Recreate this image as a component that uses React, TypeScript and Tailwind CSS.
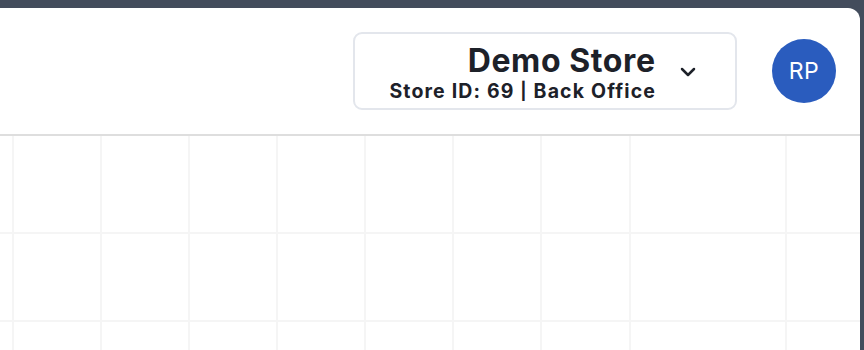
import React from "react";

const vLines = [13, 101, 189, 277, 365, 453, 541, 630, 786];
const hLines = [97, 185];

function Chevron() {
  return (
    <svg width="24" height="24" viewBox="0 0 24 24" fill="none" stroke="#1d2129" strokeWidth="2.5" strokeLinecap="round" strokeLinejoin="round">
      <path d="m6 9 6 6 6-6" />
    </svg>
  );
}

export default function App() {
  return (
    <div className="w-[864px] h-[350px] bg-[#434c5c] pt-[8px] pr-[4px] overflow-hidden" style={{ fontFamily: "Inter, 'Noto Sans', sans-serif" }}>
      <div className="w-[860px] h-[342px] bg-white rounded-tr-[12px] flex flex-col overflow-hidden">
        <header className="h-[128px] shrink-0 flex items-center justify-end pr-[24px] border-b-2 border-[#dedede]">
          <button className="w-[384px] h-[78px] rounded-[9px] border-2 border-[#e3e6ec] bg-white flex items-center justify-end pr-[35px]">
            <div className="flex flex-col items-end text-[#1d2129] font-bold mt-[3px]">
              <span className="text-[32px] leading-[36px] tracking-[0.6px] mr-[-0.6px]">Demo Store</span>
              <span className="text-[19.5px] leading-[22px] tracking-[1.15px] mr-[-1.15px] mt-[1px]">
                Store ID: 69 <span className="text-[17px] align-[1px]">|</span> Back Office
              </span>
            </div>
            <span className="ml-[21px] mt-[2px] flex"><Chevron /></span>
          </button>
          <div className="ml-[35px] w-[64px] h-[64px] rounded-full bg-[#2a5cbe] flex items-center justify-center text-white text-[23px] tracking-[0.5px]">
            RP
          </div>
        </header>
        <div className="relative flex-1">
          {vLines.map((x) => (
            <div key={"v" + x} className="absolute top-0 bottom-0 w-[2px] bg-[#f5f5f5]" style={{ left: x - 1 }} />
          ))}
          {hLines.map((y) => (
            <div key={"h" + y} className="absolute left-0 right-0 h-[2px] bg-[#f5f5f5]" style={{ top: y - 1 }} />
          ))}
        </div>
      </div>
    </div>
  );
}
